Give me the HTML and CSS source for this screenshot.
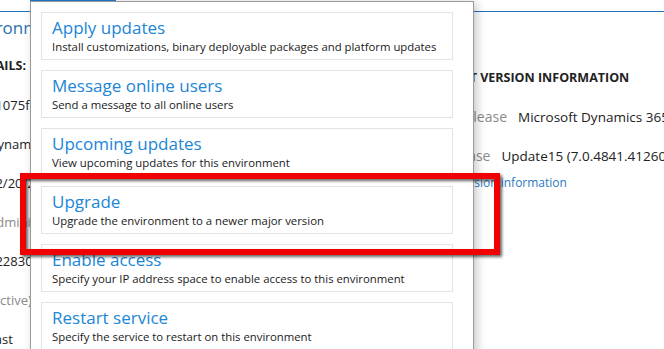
FILE: index.html
```html
<!DOCTYPE html>
<html lang="en">
<head>
    <meta charset="UTF-8">
    <meta name="viewport" content="width=device-width, initial-scale=1.0">
    <title>Environment</title>
    <link rel="stylesheet" href="styles.css">
</head>
<body>
    <div class="page">
        <div class="top-rule"></div>
        <div class="page-body">
            <section class="env-col">
                <div class="env-title">Environment</div>
                <div class="detail-list">
                    <div class="detail-row heading">ENVIRONMENT DETAILS:</div>
                    <div class="detail-row">41075fa2-8c3d-4e1b</div>
                    <div class="detail-row">Dynamics 365</div>
                    <div class="detail-row">12/20/2017</div>
                    <div class="detail-row muted">Administrator</div>
                    <div class="detail-row">722830</div>
                    <div class="detail-row muted">(Active)</div>
                    <div class="detail-row">Fast</div>
                </div>
            </section>
            <section class="version-col">
                <div class="detail-row heading">ENVIRONMENT VERSION INFORMATION</div>
                <div class="detail-row">
                    <span class="label">Application release</span>
                    <span class="value">Microsoft Dynamics 365 for Finance and Operations</span>
                </div>
                <div class="detail-row">
                    <span class="label">Platform release</span>
                    <span class="value">Update15 (7.0.4841.41260)</span>
                </div>
                <a class="version-link" href="#">View detailed version information</a>
            </section>
        </div>
    </div>

    <div class="flyout">
        <div class="action-card">
            <div class="action-name">Apply updates</div>
            <div class="action-desc">Install customizations, binary deployable packages and platform updates</div>
        </div>
        <div class="action-card">
            <div class="action-name">Message online users</div>
            <div class="action-desc">Send a message to all online users</div>
        </div>
        <div class="action-card">
            <div class="action-name">Upcoming updates</div>
            <div class="action-desc">View upcoming updates for this environment</div>
        </div>
        <div class="action-card">
            <div class="action-name">Upgrade</div>
            <div class="action-desc">Upgrade the environment to a newer major version</div>
        </div>
        <div class="action-card">
            <div class="action-name">Enable access</div>
            <div class="action-desc">Specify your IP address space to enable access to this environment</div>
        </div>
        <div class="action-card">
            <div class="action-name">Restart service</div>
            <div class="action-desc">Specify the service to restart on this environment</div>
        </div>
    </div>

    <div class="callout"></div>
</body>
</html>
```

FILE: styles.css
```css
body {
    margin: 0;
    height: 349px;
    overflow: hidden;
    background-color: white;
    font-family: 'Segoe UI', 'Open Sans', sans-serif;
    color: #222;
    position: relative;
}

.page {
    width: 664px;
}

.top-rule {
    height: 11px;
    border-bottom: 1px solid #1e72bd;
}

.page-body {
    display: flex;
}

.env-col {
    width: 395px;
    margin-left: -12px;
    flex-shrink: 0;
}

.env-title {
    margin-top: 4px;
    margin-left: -25px;
    font-size: 17px;
    line-height: 24px;
    color: #2a6fb0;
}

.detail-list {
    margin-top: 16px;
}

.detail-row {
    height: 39px;
    line-height: 20px;
    font-size: 13px;
    white-space: nowrap;
}

.detail-row.heading {
    font-size: 12.5px;
    font-weight: bold;
}

.env-col .heading {
    margin-left: -113px;
}

.muted {
    color: #8a8a8a;
}

.version-col {
    margin-top: 56px;
    flex-shrink: 0;
}

.version-col .detail-row {
    display: flex;
    align-items: baseline;
    gap: 11px;
}

.label {
    font-size: 14px;
    color: #8a8a8a;
}

.value {
    font-size: 13.5px;
}

.version-col .detail-row:nth-child(3) {
    height: 27px;
}

.version-link {
    display: block;
    margin-left: -4px;
    font-size: 12px;
    line-height: 20px;
    color: #2a7ac0;
    text-decoration: none;
    white-space: nowrap;
}

.flyout {
    position: absolute;
    left: 30px;
    top: 1px;
    width: 412px;
    height: 400px;
    padding: 10px 20px 0 10px;
    background-color: white;
    border: 1px solid #9a9a9a;
    box-shadow: 3px 2px 9px rgba(0, 0, 0, 0.22);
    display: flex;
    flex-direction: column;
    gap: 10px;
}

.flyout::before {
    content: "";
    position: absolute;
    left: -1px;
    top: -2px;
    width: 86px;
    height: 1px;
    background-color: #1e72bd;
}

.action-card {
    height: 42px;
    border: 1px solid #e3e3e3;
    padding: 4px 10px 0 10px;
    flex-shrink: 0;
}

.action-name {
    font-size: 17px;
    line-height: 22px;
    color: #2086d6;
}

.action-desc {
    font-size: 11.35px;
    line-height: 16px;
    color: #1a1a1a;
}

.callout {
    position: absolute;
    left: 20px;
    top: 173px;
    width: 468px;
    height: 70px;
    border: 6px solid #f00000;
    filter: drop-shadow(2px 2px 1.5px rgba(0, 0, 0, 0.6));
}
```
